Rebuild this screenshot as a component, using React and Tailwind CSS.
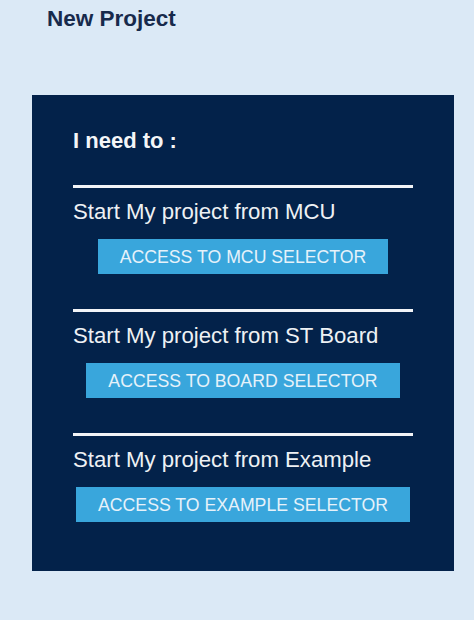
import React from "react";

const sections = [
  { label: "Start My project from MCU", button: "ACCESS TO MCU SELECTOR" },
  { label: "Start My project from ST Board", button: "ACCESS TO BOARD SELECTOR" },
  { label: "Start My project from Example", button: "ACCESS TO EXAMPLE SELECTOR" },
];

function App() {
  return (
    <div className="min-h-[620px] w-[474px] bg-[#dbe9f6] pt-[6px] font-['Liberation_Sans',Arial,sans-serif]">
      {/* TITLE */}
      <h1 className="pl-[47px] text-[22.5px] font-bold leading-[26px] text-[#172a4c]">
        New Project
      </h1>

      {/* PANEL */}
      <div className="ml-[32px] mt-[63px] w-[422px] bg-[#03224a] px-[41px] pt-[33px] pb-[14px]">
        <h2 className="text-[22px] font-bold leading-[26px] text-[#f4f6f8]">
          I need to :
        </h2>

        <div className="mt-[31px]">
          {sections.map((s) => (
            <div key={s.button} className="mb-[35px] flex flex-col">
              <div className="h-[3px] bg-[#f2f4f7]" />
              <p className="mt-[11px] text-[22.2px] leading-[26px] text-[#eef1f4]">
                {s.label}
              </p>
              <div className="mt-[14px] flex justify-center">
                <button className="h-[35px] bg-[#39a6dc] px-[22px] pt-px text-[17.7px] leading-[34px] text-[#e6f2fa]">
                  {s.button}
                </button>
              </div>
            </div>
          ))}
        </div>
      </div>
    </div>
  );
}

export default App;
